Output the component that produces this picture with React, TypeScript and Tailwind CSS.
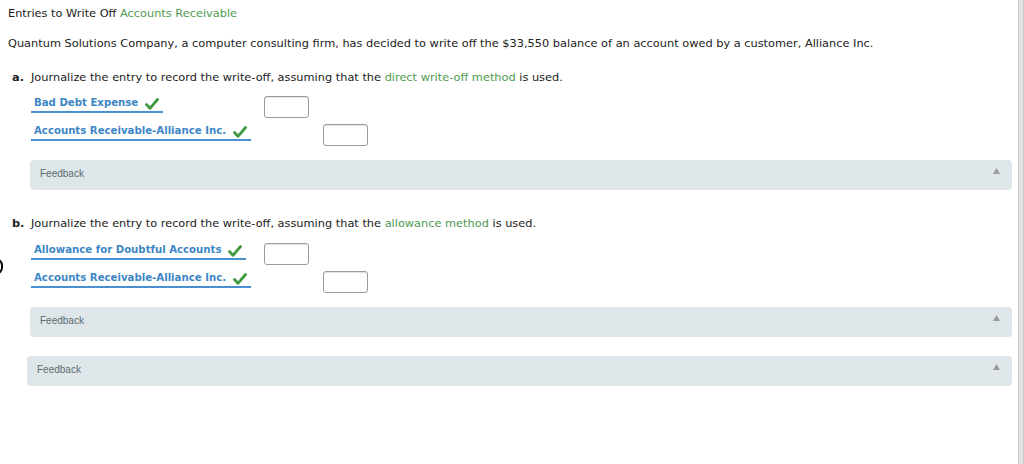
import React from "react";

const Check = () => (
  <svg width="14" height="12" viewBox="0 0 14 12" className="inline-block ml-[7px] -mb-[1px]">
    <path d="M1.5 6.5 L5 10.3 L12.5 1.5" fill="none" stroke="#3f9b3f" strokeWidth="2.8" strokeLinecap="round" strokeLinejoin="round" />
  </svg>
);

const Label = ({ text }: { text: string }) => (
  <div className="w-[233px] shrink-0">
    <span
      className="inline-block h-[18px] leading-[16px] pl-[3px] pr-[4px] border-b-2 border-[#4a8fcf] text-[11.3px] font-bold text-[#3d86c6] whitespace-nowrap"
      style={{ fontFamily: '"DejaVu Sans Condensed", "DejaVu Sans", Verdana, sans-serif' }}
    >
      {text}
      <Check />
    </span>
  </div>
);

const Input = ({ credit }: { credit?: boolean }) => (
  <div
    className={`${credit ? "ml-[59px]" : ""} mt-[2px] w-[45px] h-[22px] rounded-[3px] border border-[#9b9b9b] bg-white shadow-[inset_0_1px_1px_rgba(0,0,0,0.12)]`}
  />
);

const Row = ({ text, credit }: { text: string; credit?: boolean }) => (
  <div className="flex items-start h-[24px]">
    <Label text={text} />
    <Input credit={credit} />
  </div>
);

const Feedback = ({ className }: { className: string }) => (
  <div
    className={`${className} h-[30px] rounded-[4px] bg-[#dfe6e9] flex justify-between items-start pr-[12px]`}
    style={{ fontFamily: '"Liberation Sans", Arial, sans-serif' }}
  >
    <span className="text-[10px] leading-[12px] mt-[8px] text-[#5b6c71]">Feedback</span>
    <svg width="7" height="6" viewBox="0 0 7 6" className="mt-[8px]">
      <path d="M3.5 0 L7 6 L0 6 Z" fill="#9a9a9a" />
    </svg>
  </div>
);

export default function App() {
  return (
    <div
      className="relative w-[1024px] h-[464px] bg-white overflow-hidden flex text-[#222]"
      style={{ fontFamily: '"DejaVu Sans", Verdana, sans-serif' }}
    >
      <div className="w-[1018px] shrink-0 pl-[8px] pt-[5px] text-[11.35px]">
        <div className="leading-[16px]">
          Entries to Write Off <span className="text-[#4e9a52]">Accounts Receivable</span>
        </div>
        <div className="leading-[16px] mt-[14px]">
          Quantum Solutions Company, a computer consulting firm, has decided to write off the $33,550 balance of an account owed by a customer, Alliance Inc.
        </div>

        <div className="leading-[16px] mt-[18px] flex pl-[4px]">
          <span className="w-[19px] font-bold">a.</span>
          <span>
            Journalize the entry to record the write-off, assuming that the{" "}
            <span className="text-[#4e9a52]">direct write-off method</span> is used.
          </span>
        </div>
        <div className="mt-[9px] pl-[23px] flex flex-col gap-[4px]">
          <Row text="Bad Debt Expense" />
          <Row text="Accounts Receivable-Alliance Inc." credit />
        </div>
        <Feedback className="mt-[14px] ml-[22px] mr-[6px] pl-[10px]" />

        <div className="leading-[16px] mt-[25px] flex pl-[4px]">
          <span className="w-[19px] font-bold">b.</span>
          <span>
            Journalize the entry to record the write-off, assuming that the{" "}
            <span className="text-[#4e9a52]">allowance method</span> is used.
          </span>
        </div>
        <div className="mt-[10px] pl-[23px] flex flex-col gap-[4px]">
          <Row text="Allowance for Doubtful Accounts" />
          <Row text="Accounts Receivable-Alliance Inc." credit />
        </div>
        <Feedback className="mt-[14px] ml-[22px] mr-[6px] pl-[10px]" />
        <Feedback className="mt-[19px] ml-[19px] mr-[6px] pl-[10px]" />
      </div>

      <div className="w-[6px] h-[464px] bg-[#e2e2e2] border-l border-r border-[#c9c9c9]" />

      <div className="absolute left-[-12px] top-[258px] w-[15px] h-[17px] rounded-full border-2 border-black" />
    </div>
  );
}
